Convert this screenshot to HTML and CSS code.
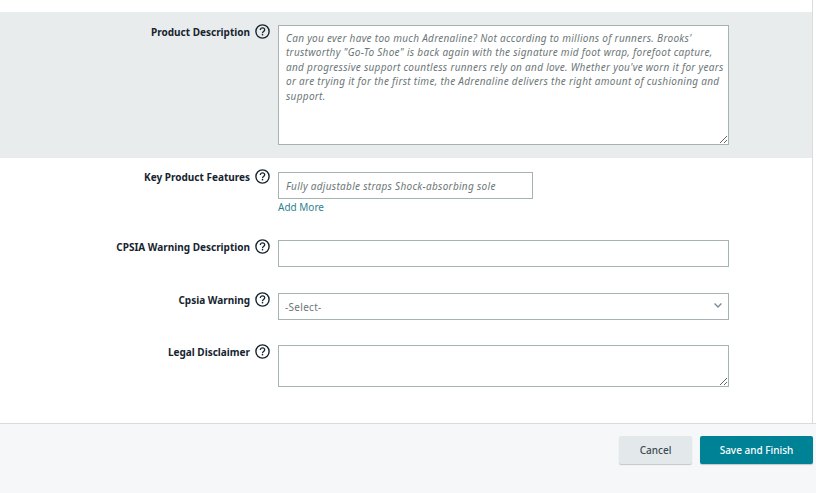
FILE: index.html
```html
<!DOCTYPE html>
<html lang="en">
<head>
<meta charset="utf-8">
<title>Product Details</title>
<link rel="stylesheet" href="styles.css">
</head>
<body>
<svg class="defs" width="0" height="0" aria-hidden="true">
  <symbol id="help" viewBox="0 0 15 15">
    <circle cx="7.5" cy="7.5" r="6.6" fill="none" stroke="#16242f" stroke-width="1.4"/>
    <path d="M5.3 5.9c0-1.3 1-2.1 2.2-2.1s2.2.8 2.2 2c0 1.8-2.2 1.7-2.2 3.4" fill="none" stroke="#16242f" stroke-width="1.3"/>
    <rect x="6.8" y="10" width="1.4" height="1.4" fill="#16242f"/>
  </symbol>
</svg>
<main class="panel">
  <section class="row row-desc">
    <div class="label"><span>Product Description</span><svg class="help"><use href="#help"/></svg></div>
    <div class="field"><textarea class="control area-desc">Can you ever have too much Adrenaline? Not according to millions of runners. Brooks' trustworthy "Go-To Shoe" is back again with the signature mid foot wrap, forefoot capture, and progressive support countless runners rely on and love. Whether you've worn it for years or are trying it for the first time, the Adrenaline delivers the right amount of cushioning and support.</textarea></div>
  </section>
  <section class="row row-features">
    <div class="label"><span>Key Product Features</span><svg class="help"><use href="#help"/></svg></div>
    <div class="field field-features">
      <input class="control input-short" type="text" placeholder="Fully adjustable straps Shock-absorbing sole">
      <a class="add-more" href="#">Add More</a>
    </div>
  </section>
  <section class="row row-cpsia">
    <div class="label"><span>CPSIA Warning Description</span><svg class="help"><use href="#help"/></svg></div>
    <div class="field"><input class="control input-full" type="text"></div>
  </section>
  <section class="row row-warning">
    <div class="label"><span>Cpsia Warning</span><svg class="help"><use href="#help"/></svg></div>
    <div class="field select-wrap">
      <select class="control input-full select"><option>-Select-</option></select>
      <svg class="chevron" width="8" height="5" viewBox="0 0 8 5"><path d="M.6.6L4 4l3.4-3.4" fill="none" stroke="#7c8c96" stroke-width="1.4"/></svg>
    </div>
  </section>
  <section class="row row-legal">
    <div class="label"><span>Legal Disclaimer</span><svg class="help"><use href="#help"/></svg></div>
    <div class="field"><textarea class="control area-legal"></textarea></div>
  </section>
</main>
<footer class="footer">
  <button class="btn btn-cancel" type="button">Cancel</button>
  <button class="btn btn-save" type="button">Save and Finish</button>
</footer>
</body>
</html>
```
FILE: styles.css
```css
* { box-sizing: border-box; }
html, body { margin: 0; height: 100%; }
body {
  width: 816px;
  height: 493px;
  overflow: hidden;
  background: #fff;
  font-family: "Noto Sans", "Open Sans", sans-serif;
  font-size: 10px;
  color: #16242f;
}
.defs { position: absolute; }
.panel {
  width: 813px;
  height: 423px;
  padding-top: 12px;
  border-right: 1px solid #d9dcdc;
}
.row {
  display: grid;
  grid-template-columns: 278px 451px;
}
.row-desc { background: #e9ecec; padding: 13px 0; }
.row-features { padding-top: 12px; }
.field-features { padding-top: 2px; }
.row-cpsia { padding-top: 26px; }
.row-warning { padding-top: 26px; }
.row-legal { padding-top: 25px; }
.label {
  display: flex;
  justify-content: flex-end;
  align-items: flex-start;
  gap: 5px;
  padding-right: 8px;
  font-weight: 700;
  line-height: 14px;
}
.help { width: 15px; height: 15px; flex: none; margin-top: -1px; }
.control {
  display: block;
  margin: 0;
  border: 1px solid #a6b3b3;
  border-radius: 0;
  background: #fff;
  font: inherit;
  color: #16242f;
  outline: none;
}
textarea.control {
  width: 451px;
  padding: 5px 2px 5px 7px;
  line-height: 14.4px;
}
.area-desc { height: 120px; font-style: italic; color: #6c7778; letter-spacing: 0.3px; }
.area-legal { height: 42px; }
input.control { height: 27px; padding: 0 7px; }
input::placeholder { color: #6c7778; opacity: 1; font-style: italic; letter-spacing: 0.3px; }
.input-short { width: 255px; }
.input-full { width: 451px; }
.add-more {
  display: block;
  margin-top: 1px;
  line-height: 14px;
  color: #2f7f92;
  text-decoration: none;
}
.select-wrap { position: relative; }
.select { height: 27px; padding: 0 6px; appearance: none; color: #6c7778; letter-spacing: 0.3px; }
.chevron { position: absolute; right: 7px; top: 10px; }
.footer {
  height: 70px;
  display: flex;
  justify-content: flex-end;
  align-items: flex-start;
  gap: 8px;
  padding: 12px 3px 0 0;
  background: #f5f7f8;
  border-top: 1px solid #d9dcdc;
}
.btn {
  height: 28px;
  border: 0;
  border-radius: 2px;
  font: inherit;
  font-weight: 500;
  box-shadow: 0 1px 1px rgba(0, 0, 0, 0.2);
}
.btn-cancel { width: 73px; background: #e3e9ea; color: #3d4a52; }
.btn-save { width: 113px; background: #008296; color: #fff; }
```
